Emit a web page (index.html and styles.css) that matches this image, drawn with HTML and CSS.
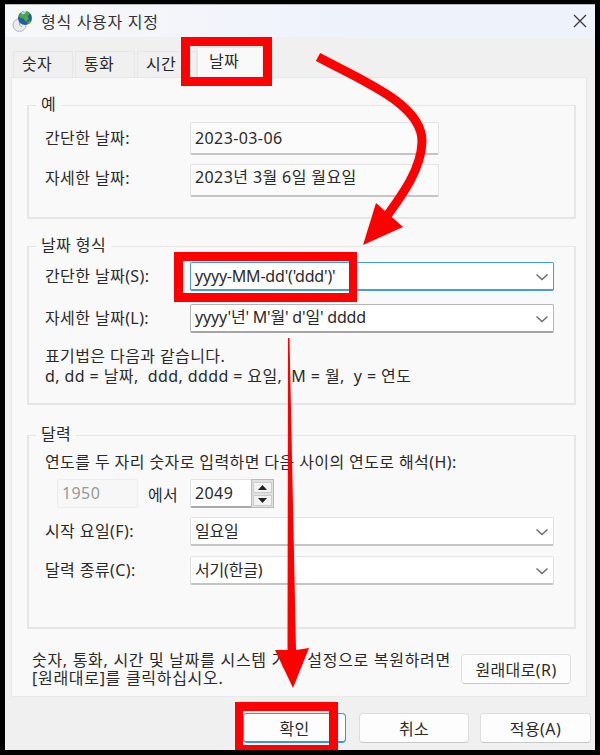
FILE: index.html
```html
<!DOCTYPE html>
<html lang="ko">
<head>
    <meta charset="UTF-8">
    <title>형식 사용자 지정</title>
    <link rel="stylesheet" href="styles.css">
</head>
<body>
    <div class="window">
        <div class="titlebar">
            <svg class="app-icon" width="22" height="22" viewBox="0 0 22 22">
                <circle cx="7.500" cy="15" r="6.500" fill="#e9ebeb" stroke="#b4b8b8"/>
                <path d="M7.500 11V15L10 17" fill="none" stroke="#a5a9a9"/>
                <circle cx="13" cy="8" r="7" fill="#1f5fa8"/>
                <path d="M7 6C8 3 10.500 1.300 13 1C15 1 17 2.300 18 4L15.500 6L17 9L14 12L11.500 8.500L8.500 8Z" fill="#4fa63c"/>
                <path d="M9 2.700C10.500 1.400 12.500 .8 14.500 1.200L12.500 4L10 4.500Z" fill="#a9dcf2"/>
                <path d="M14.500 13L18 10.500L19.500 11.500L17 14Z" fill="#4fa63c"/>
            </svg>
            <span class="title">형식 사용자 지정</span>
            <svg class="close" width="14" height="14" viewBox="0 0 14 14">
                <path d="M1 1L13 13M13 1L1 13" stroke="#3a3a3a" stroke-width="1.3"/>
            </svg>
        </div>

        <div class="tabs">
            <div class="tab">숫자</div>
            <div class="tab">통화</div>
            <div class="tab">시간</div>
            <div class="tab active">날짜</div>
        </div>

        <div class="panel">
            <fieldset class="group group-sample">
                <legend>예</legend>
                <div class="row">
                    <label>간단한 날짜:</label>
                    <div class="field readonly">2023-03-06</div>
                </div>
                <div class="row">
                    <label class="label-high">자세한 날짜:</label>
                    <div class="field readonly text-high">2023년 3월 6일 월요일</div>
                </div>
            </fieldset>

            <fieldset class="group group-format">
                <legend>날짜 형식</legend>
                <div class="row">
                    <label>간단한 날짜(S):</label>
                    <div class="field combo focused">yyyy-MM-dd'('ddd')'
                        <svg class="chevron" width="14" height="8" viewBox="0 0 14 8"><path d="M1.500 1.500L7 6.500L12.500 1.500" fill="none" stroke="#666" stroke-width="1.300"/></svg>
                    </div>
                </div>
                <div class="row">
                    <label>자세한 날짜(L):</label>
                    <div class="field combo strong">yyyy'년' M'월' d'일' dddd
                        <svg class="chevron" width="14" height="8" viewBox="0 0 14 8"><path d="M1.500 1.500L7 6.500L12.500 1.500" fill="none" stroke="#666" stroke-width="1.300"/></svg>
                    </div>
                </div>
                <p class="note">표기법은 다음과 같습니다.<br>d, dd = 날짜,&nbsp; ddd, dddd = 요일,&nbsp; M = 월,&nbsp; y = 연도</p>
            </fieldset>

            <fieldset class="group group-calendar">
                <legend>달력</legend>
                <p class="hint">연도를 두 자리 숫자로 입력하면 다음 사이의 연도로 해석(H):</p>
                <div class="year-row">
                    <div class="field year-from">1950</div>
                    <span class="year-to">에서</span>
                    <div class="field spinner">
                        2049
                        <div class="spin">
                            <div class="spin-btn"><svg width="9" height="5" viewBox="0 0 9 5"><path d="M4.500 0L9 5H0Z" fill="#222"/></svg></div>
                            <div class="spin-btn"><svg width="9" height="5" viewBox="0 0 9 5"><path d="M0 0H9L4.500 5Z" fill="#222"/></svg></div>
                        </div>
                    </div>
                </div>
                <div class="row">
                    <label>시작 요일(F):</label>
                    <div class="field combo">일요일
                        <svg class="chevron" width="14" height="8" viewBox="0 0 14 8"><path d="M1.500 1.500L7 6.500L12.500 1.500" fill="none" stroke="#666" stroke-width="1.300"/></svg>
                    </div>
                </div>
                <div class="row">
                    <label>달력 종류(C):</label>
                    <div class="field combo">서기(한글)
                        <svg class="chevron" width="14" height="8" viewBox="0 0 14 8"><path d="M1.500 1.500L7 6.500L12.500 1.500" fill="none" stroke="#666" stroke-width="1.300"/></svg>
                    </div>
                </div>
            </fieldset>

            <div class="restore">
                <p>숫자, 통화, 시간 및 날짜를 시스템 기본 설정으로 복원하려면<br>[원래대로]를 클릭하십시오.</p>
                <button class="btn btn-restore">원래대로(R)</button>
            </div>
        </div>

        <div class="actions">
            <button class="btn btn-ok">확인</button>
            <button class="btn btn-cancel">취소</button>
            <button class="btn btn-apply">적용(A)</button>
        </div>
    </div>

    <!-- red annotations drawn on top of the screenshot -->
    <svg class="marks" width="600" height="755" viewBox="0 0 600 755">
        <path fill="#ff0000" fill-rule="evenodd" d="M181 37H272V86H181ZM190 46V77H263V46Z"/>
        <path fill="#ff0000" fill-rule="evenodd" d="M174 252H357V302H174ZM183 261V293H349V261Z"/>
        <path fill="#ff0000" fill-rule="evenodd" d="M235 702H338V750H235ZM243 711V745H329V711Z"/>
        <path d="M318 57C365 82 423 105 422 142C421 170 402 195 384 220" fill="none" stroke="#ff0000" stroke-width="9"/>
        <path d="M376 203L403 227L363 245Z" fill="#ff0000"/>
        <path d="M288 338L289.500 338L296 650L309 648L293 688L275 650L287.500 650Z" fill="#ff0000"/>
    </svg>
</body>
</html>
```

FILE: styles.css
```css
* {
    box-sizing: border-box;
}

html, body {
    margin: 0;
    height: 755px;
    overflow: hidden;
}

body {
    position: relative;
    padding: 4px 5px 5px;
    background-color: #000;
    color: #2a2a2a;
    font-family: "Noto Sans", "Noto Sans CJK KR", sans-serif;
    font-size: 16px;
    letter-spacing: 0.4px;
}

.window {
    display: flex;
    flex-direction: column;
    height: 746px;
    background-color: #f0f0f0;
    border-top: 1px solid #bbb;
}

.titlebar {
    display: flex;
    align-items: center;
    flex: none;
    height: 32px;
    padding: 0 8px 0 7px;
    background: linear-gradient(to right, #f7f8f9, #eef2fb 60%);
}

.app-icon {
    margin-right: 7px;
}

.title {
    flex: 1;
    color: #333;
    font-size: 16px;
    letter-spacing: 0.7px;
}

.tabs {
    display: flex;
    align-items: flex-end;
    flex: none;
    gap: 2px;
    height: 40px;
    padding-left: 8px;
}

.tab {
    width: 60px;
    height: 26px;
    padding-left: 8px;
    border: 1px solid #e6e6e6;
    border-bottom: none;
    line-height: 24px;
}

.tab.active {
    position: relative;
    top: 1px;
    width: 66px;
    height: 31px;
    margin-left: -2px;
    padding-left: 11px;
    background-color: #f9f9f9;
    line-height: 27px;
}

.panel {
    flex: none;
    width: 576px;
    height: 620px;
    margin-left: 6px;
    padding: 17px 10px 0 15px;
    background-color: #f9f9f9;
    border: 1px solid #e8e8e8;
}

.group {
    margin: 0;
    padding: 7px 0 0 16px;
    border: 2px solid #e6e6e6;
    border-top-width: 1px;
    border-radius: 1px;
}

.group legend {
    margin-left: -9px;
    padding: 0 5px;
    height: 20px;
    line-height: 18px;
}

.group-sample {
    height: 124px;
}

.group-format {
    height: 169px;
    margin-top: 17px;
    padding-top: 6px;
}

.group-calendar {
    height: 204px;
    margin-top: 20px;
}

.row {
    display: flex;
    align-items: center;
    margin-bottom: 13px;
}

.row label {
    flex: none;
    width: 145px;
    padding-bottom: 3px;
    white-space: nowrap;
}

.row .label-high {
    padding-bottom: 7px;
}

.field {
    position: relative;
    flex: none;
    height: 29px;
    padding-left: 4px;
    background-color: #fff;
    border: 1px solid #e2e2e2;
    border-bottom: 2px solid #c4c4c4;
    border-radius: 2px;
    line-height: 26px;
}

.readonly {
    width: 249px;
    height: 33px;
    background-color: #fbfbfb;
    line-height: 30px;
}

.readonly.text-high {
    line-height: 25px;
}

.group-sample .row {
    margin-bottom: 9px;
}

.combo {
    width: 364px;
    letter-spacing: -0.2px;
}

.combo.focused {
    border: 1px solid #4a9ae0;
    border-bottom: 2px solid #4a9ae0;
}

.combo.strong {
    border: 1px solid #b5b5b5;
    border-bottom: 2px solid #a5a5a5;
    line-height: 24px;
}

.chevron {
    position: absolute;
    top: 10px;
    right: 4px;
}

.note {
    margin: 2px 0 0;
    line-height: 20px;
    white-space: nowrap;
}

.hint {
    margin: 0 0 7px;
    line-height: 20px;
    white-space: nowrap;
}

.year-row {
    display: flex;
    align-items: center;
    margin-bottom: 9px;
    padding-left: 12px;
}

.group-calendar .row {
    margin-bottom: 10px;
}

.year-from {
    width: 81px;
    color: #999;
    background-color: #f7f7f7;
    border: 1px solid #ececec;
}

.year-to {
    width: 52px;
    padding-left: 10px;
    white-space: nowrap;
}

.spinner {
    width: 84px;
    padding-right: 22px;
    border-bottom-color: #aaa;
}

.spin {
    position: absolute;
    top: -1px;
    right: -1px;
    display: flex;
    flex-direction: column;
    justify-content: center;
    gap: 2px;
    width: 23px;
    height: 29px;
    background-color: #e0e0e0;
    border: 1px solid #bbb;
}

.spin-btn {
    display: flex;
    align-items: center;
    justify-content: center;
    height: 11px;
    margin: 0 1px;
    background-color: #f2f2f2;
    border: 1px solid #ccc;
}

.restore {
    display: flex;
    justify-content: space-between;
    margin: 22px 5px 0 5px;
}

.restore p {
    margin: 0;
    line-height: 18px;
    letter-spacing: 0.7px;
    white-space: nowrap;
}

.btn {
    height: 30px;
    padding: 0;
    background-color: #fdfdfd;
    border: 1px solid #dedede;
    border-bottom-color: #c8c8c8;
    border-radius: 4px;
    color: #2a2a2a;
    font-family: inherit;
    font-size: 16px;
    letter-spacing: 0.4px;
}

.btn-restore {
    flex: none;
    width: 110px;
    margin-top: 3px;
}

.actions {
    display: flex;
    flex: none;
    padding: 16px 0 0 238px;
}

.btn-ok {
    width: 103px;
    border: 1px solid #3f95dc;
    border-bottom-width: 2px;
}

.btn-cancel {
    width: 110px;
    margin-left: 13px;
}

.btn-apply {
    width: 111px;
    margin-left: 11px;
}

.marks {
    position: absolute;
    top: 0;
    left: 0;
    pointer-events: none;
}
```
